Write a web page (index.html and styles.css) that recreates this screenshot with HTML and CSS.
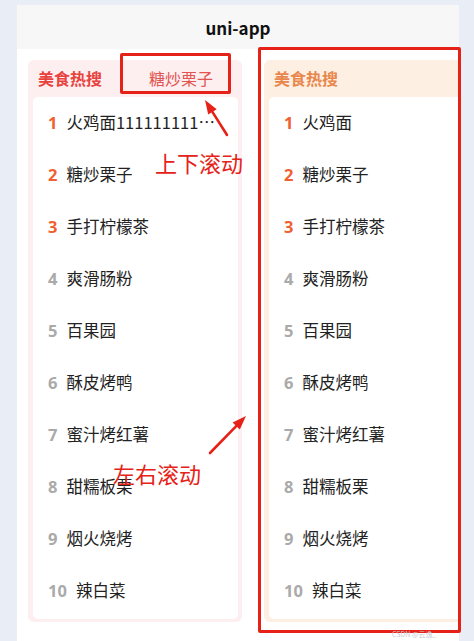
FILE: index.html
```html
<!DOCTYPE html>
<html lang="zh">
<head>
<meta charset="utf-8">
<title>uni-app</title>
<link rel="stylesheet" href="styles.css">
</head>
<body>
<div class="frame">
  <div class="navbar">uni-app</div>
  <div class="content">
    <div class="card card-red">
      <div class="card-head">
        <span class="head-title">美食热搜</span>
        <span class="head-swiper">糖炒栗子</span>
      </div>
      <ul class="list">
        <li class="row"><span class="num top">1</span><span class="name">火鸡面1111111111111111</span></li>
        <li class="row"><span class="num top">2</span><span class="name">糖炒栗子</span></li>
        <li class="row"><span class="num top">3</span><span class="name">手打柠檬茶</span></li>
        <li class="row"><span class="num">4</span><span class="name">爽滑肠粉</span></li>
        <li class="row"><span class="num">5</span><span class="name">百果园</span></li>
        <li class="row"><span class="num">6</span><span class="name">酥皮烤鸭</span></li>
        <li class="row"><span class="num">7</span><span class="name">蜜汁烤红薯</span></li>
        <li class="row"><span class="num">8</span><span class="name">甜糯板栗</span></li>
        <li class="row"><span class="num">9</span><span class="name">烟火烧烤</span></li>
        <li class="row"><span class="num">10</span><span class="name">辣白菜</span></li>
      </ul>
    </div>
    <div class="card card-orange">
      <div class="card-head">
        <span class="head-title">美食热搜</span>
      </div>
      <ul class="list">
        <li class="row"><span class="num top">1</span><span class="name">火鸡面</span></li>
        <li class="row"><span class="num top">2</span><span class="name">糖炒栗子</span></li>
        <li class="row"><span class="num top">3</span><span class="name">手打柠檬茶</span></li>
        <li class="row"><span class="num">4</span><span class="name">爽滑肠粉</span></li>
        <li class="row"><span class="num">5</span><span class="name">百果园</span></li>
        <li class="row"><span class="num">6</span><span class="name">酥皮烤鸭</span></li>
        <li class="row"><span class="num">7</span><span class="name">蜜汁烤红薯</span></li>
        <li class="row"><span class="num">8</span><span class="name">甜糯板栗</span></li>
        <li class="row"><span class="num">9</span><span class="name">烟火烧烤</span></li>
        <li class="row"><span class="num">10</span><span class="name">辣白菜</span></li>
      </ul>
    </div>
  </div>
</div>

<div class="note-box note-box-1"></div>
<div class="note-box note-box-2"></div>
<div class="note-text note-text-1">上下滚动</div>
<div class="note-text note-text-2">左右滚动</div>
<svg class="arrows" width="474" height="641" viewBox="0 0 474 641">
  <line x1="227" y1="135" x2="212.4" y2="111.9" stroke="#e62117" stroke-width="2.6" stroke-linecap="round"/>
  <polygon points="205,100 216.7,109.3 208.2,114.6" fill="#e62117"/>
  <line x1="210" y1="453" x2="236.2" y2="426.1" stroke="#e62117" stroke-width="2.6" stroke-linecap="round"/>
  <polygon points="246,416 239.8,429.6 232.6,422.6" fill="#e62117"/>
</svg>
<div class="watermark">CSDN @云逸_</div>
</body>
</html>
```

FILE: styles.css
```css
* { box-sizing: border-box; }

html, body {
  margin: 0;
  padding: 0;
}

body {
  width: 474px;
  height: 641px;
  background: #e9eef6;
  font-family: "Noto Sans CJK SC", "Noto Sans", sans-serif;
  color: #222;
  overflow: hidden;
  position: relative;
}

.frame {
  margin: 5px 0 0 17px;
  width: 442px;
  height: 636px;
  background: #ffffff;
  overflow: hidden;
}

.navbar {
  height: 44px;
  background: #f7f7f7;
  display: flex;
  align-items: center;
  justify-content: center;
  font-size: 17px;
  font-weight: 700;
  color: #111;
}

.content {
  display: flex;
  gap: 22px;
  padding: 11px 0 0 11px;
}

.card {
  flex: 0 0 214px;
  width: 214px;
  min-width: 0;
  height: 562px;
  border-radius: 6px;
  padding: 0 4px 3px 5px;
  display: flex;
  flex-direction: column;
  overflow: hidden;
}

.card-red { background: #fdeef0; }
.card-orange { background: #fdf0e2; flex-basis: 220px; width: 220px; }

.card-head {
  height: 37px;
  flex: none;
  display: flex;
  align-items: center;
  padding-left: 5px;
  padding-bottom: 1px;
  font-size: 16px;
}

.head-title {
  font-weight: 700;
  line-height: 1;
}

.card-red .head-title { color: #e8423d; }
.card-orange .head-title { color: #e9864c; }

.head-swiper {
  margin-left: 47px;
  color: #e35450;
  line-height: 1;
}

.list {
  list-style: none;
  margin: 0;
  padding: 0 20px 0 15px;
  flex: 1;
  min-width: 0;
  background: #ffffff;
  border-radius: 5px;
}

.row {
  height: 52px;
  display: flex;
  align-items: center;
  font-size: 16.5px;
  min-width: 0;
  padding-bottom: 2px;
}

.num {
  flex: none;
  font-weight: 700;
  color: #aaaaaa;
  margin-right: 9px;
  font-family: "Noto Sans", "Noto Sans CJK SC", sans-serif;
}

.num.top { color: #f06030; }

.name {
  flex: 1;
  min-width: 0;
  white-space: nowrap;
  overflow: hidden;
  text-overflow: ellipsis;
  color: #222;
}

.note-box {
  position: absolute;
  border: 3px solid #e62117;
  border-radius: 2px;
}

.note-box-1 {
  left: 120px;
  top: 53px;
  width: 111px;
  height: 41px;
}

.note-box-2 {
  left: 258px;
  top: 47px;
  width: 203px;
  height: 586px;
}

.note-text {
  position: absolute;
  font-size: 22px;
  line-height: 26px;
  color: #e62117;
  white-space: nowrap;
}

.note-text-1 { left: 155px; top: 149px; }
.note-text-2 { left: 113px; top: 460px; }

.arrows {
  position: absolute;
  left: 0;
  top: 0;
  pointer-events: none;
}

.watermark {
  position: absolute;
  left: 392px;
  top: 630px;
  font-size: 7px;
  line-height: 8px;
  color: #c8ccd4;
  white-space: nowrap;
}
```
